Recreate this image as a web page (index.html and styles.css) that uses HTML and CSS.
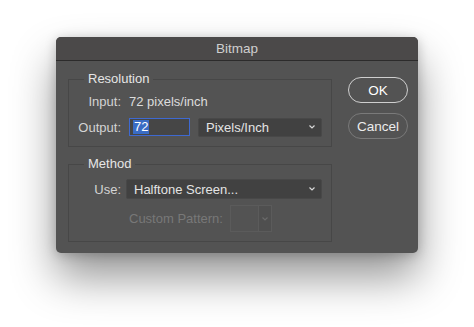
FILE: index.html
```html
<!DOCTYPE html>
<html lang="en">
<head>
    <meta charset="UTF-8">
    <title>Bitmap</title>
    <link rel="stylesheet" href="styles.css">
</head>
<body>
    <div class="dialog">
        <div class="titlebar">Bitmap</div>

        <div class="content">
            <div class="groups">
                <fieldset class="group resolution">
                    <legend>Resolution</legend>
                    <div class="row">
                        <span class="label">Input:</span>
                        <span class="value">72 pixels/inch</span>
                    </div>
                    <div class="row">
                        <span class="label">Output:</span>
                        <div class="field-row">
                            <div class="text-input"><span class="selected">72</span></div>
                            <div class="select select-unit">
                                <span>Pixels/Inch</span>
                                <svg class="chevron" width="8" height="6" viewBox="0 0 8 6"><path d="M1.5 1.5 L4 4 L6.5 1.5" fill="none" stroke="#d8d8d8" stroke-width="1.2"/></svg>
                            </div>
                        </div>
                    </div>
                </fieldset>

                <fieldset class="group method">
                    <legend>Method</legend>
                    <div class="row">
                        <span class="label">Use:</span>
                        <div class="select select-method">
                            <span>Halftone Screen...</span>
                            <svg class="chevron" width="8" height="6" viewBox="0 0 8 6"><path d="M1.5 1.5 L4 4 L6.5 1.5" fill="none" stroke="#d8d8d8" stroke-width="1.2"/></svg>
                        </div>
                    </div>
                    <div class="row pattern-row">
                        <span class="label"></span>
                        <div class="pattern">
                            <span class="disabled">Custom Pattern:</span>
                            <div class="pattern-picker">
                                <div class="swatch"></div>
                                <div class="picker-arrow">
                                    <svg width="8" height="6" viewBox="0 0 8 6"><path d="M1.5 1.5 L4 4 L6.5 1.5" fill="none" stroke="#6a6a6a" stroke-width="1.2"/></svg>
                                </div>
                            </div>
                        </div>
                    </div>
                </fieldset>
            </div>

            <div class="buttons">
                <button class="btn btn-default">OK</button>
                <button class="btn">Cancel</button>
            </div>
        </div>
    </div>
</body>
</html>
```

FILE: styles.css
```css
* {
    margin: 0;
    padding: 0;
    box-sizing: border-box;
}

html,
body {
    background: #ffffff;
}

body {
    font-family: 'Liberation Sans', Arial, sans-serif;
    font-size: 13px;
    min-height: 100vh;
    padding: 37px 0 0 56px;
}

.dialog {
    width: 362px;
    height: 216px;
    background: #535353;
    border-radius: 5px;
    overflow: hidden;
    box-shadow: 0 24px 44px rgba(0, 0, 0, 0.42), 0 2px 12px rgba(0, 0, 0, 0.22);
}

.titlebar {
    height: 24px;
    background: #4b4949;
    border-bottom: 1px solid #2c2b2b;
    color: #cfcfcf;
    text-align: center;
    line-height: 23px;
    font-size: 13.5px;
}

.content {
    display: flex;
    padding: 10px 10px 12px 12px;
}

.groups {
    width: 264px;
}

.group {
    border: 1px solid #474747;
    padding: 0 9px 9px 0;
}

.group legend {
    margin-left: 15px;
    padding: 0 4px;
    line-height: 16px;
    color: #e6e6e6;
    font-size: 13px;
}

.resolution {
    padding-top: 4px;
}

.method {
    margin-top: 9px;
    padding-top: 7px;
}

.row {
    display: flex;
    align-items: center;
    min-height: 20px;
}

.row + .row {
    margin-top: 6px;
}

.label {
    width: 52px;
    text-align: right;
    color: #d4d4d4;
    flex-shrink: 0;
    margin-right: 8px;
}

.value {
    color: #dcdcdc;
}

.field-row {
    display: flex;
    align-items: center;
    gap: 8px;
}

.text-input {
    width: 61px;
    height: 18px;
    border: 1.5px solid #3e69d1;
    background: #464646;
    padding-left: 3px;
    display: flex;
    align-items: center;
}

.selected {
    background: #3a6cc4;
    color: #ffffff;
    line-height: 14px;
    padding: 0 1px;
}

.select {
    height: 19px;
    background: #414141;
    border: 1px solid #484848;
    border-radius: 2px;
    display: flex;
    align-items: center;
    justify-content: space-between;
    padding: 0 5px 0 7px;
    color: #e4e4e4;
}

.select-unit {
    width: 124px;
}

.select-method {
    width: 196px;
    height: 20px;
    margin-left: -3px;
}

.chevron {
    display: block;
}

.pattern-row {
    min-height: 27px;
}

.pattern {
    display: flex;
    align-items: center;
    gap: 7px;
}

.disabled {
    color: #787878;
}

.pattern-picker {
    display: flex;
    width: 42px;
    height: 27px;
    border: 1px solid #5b5b5b;
}

.swatch {
    flex: 1;
    border-right: 1px solid #5b5b5b;
}

.picker-arrow {
    width: 12px;
    display: flex;
    align-items: center;
    justify-content: center;
    background: #4f4f4f;
}

.buttons {
    margin-left: 16px;
    padding-top: 6px;
    display: flex;
    flex-direction: column;
    gap: 10px;
}

.btn {
    width: 60px;
    height: 26px;
    border-radius: 13px;
    border: 1px solid #7a7a7a;
    background: #535353;
    color: #ececec;
    font-family: 'Liberation Sans', Arial, sans-serif;
    font-size: 13.5px;
}

.btn-default {
    border: 1.5px solid #cfcfcf;
    color: #ffffff;
}
```
